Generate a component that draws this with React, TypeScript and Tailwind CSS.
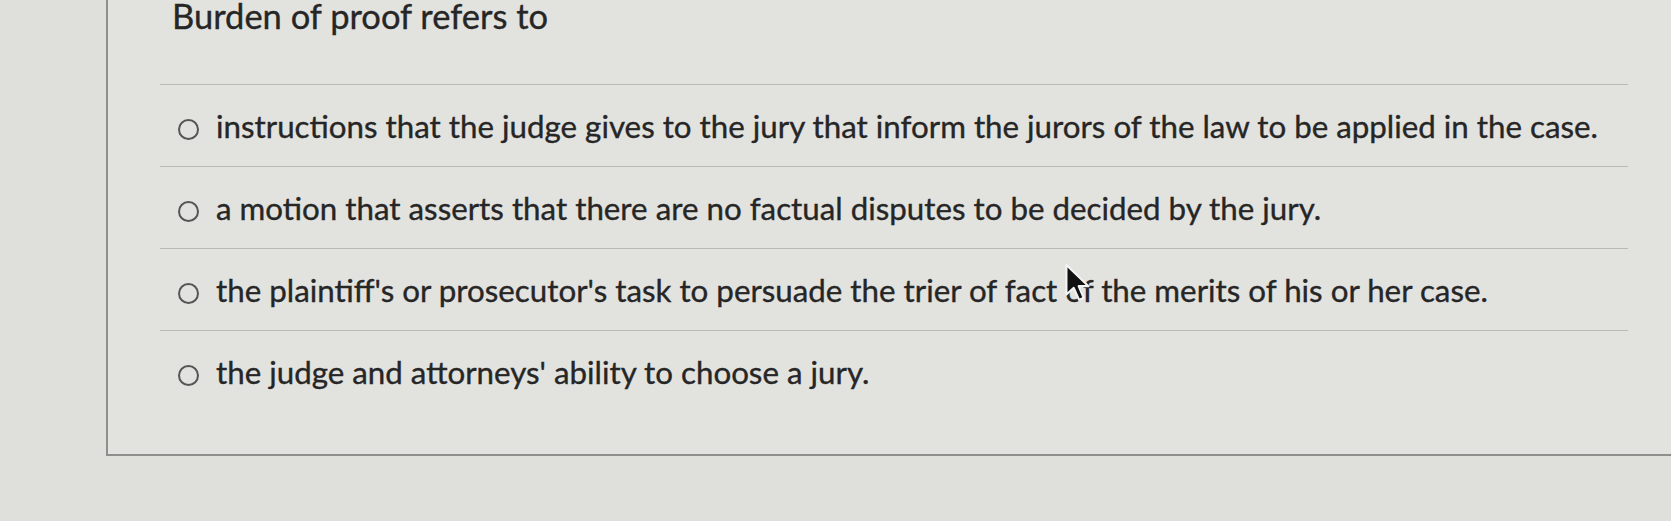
import React from "react";

const options = [
  "instructions that the judge gives to the jury that inform the jurors of the law to be applied in the case.",
  "a motion that asserts that there are no factual disputes to be decided by the jury.",
  "the plaintiff's or prosecutor's task to persuade the trier of fact of the merits of his or her case.",
  "the judge and attorneys' ability to choose a jury.",
];

function Cursor() {
  return (
    <svg
      className="absolute left-[1064px] top-[263px]"
      width="28"
      height="40"
      viewBox="0 0 13 19"
    >
      <path
        d="M1 1 L1 15 L4.5 11.8 L7 17.5 L9.2 16.5 L6.8 11 L11.5 11 Z"
        fill="#111"
        stroke="#f4f4f4"
        strokeWidth="1"
        strokeLinejoin="round"
      />
    </svg>
  );
}

export default function App() {
  return (
    <div
      className="relative w-[1671px] h-[521px] overflow-hidden bg-[#dfdfdc] text-[#262626] [-webkit-text-stroke:0.35px_#262626]"
      style={{ fontFamily: "Lato, 'Open Sans', sans-serif" }}
    >
      <div className="ml-[106px] h-[456px] border-l-2 border-b-2 border-[#8e8e8c] bg-[#e2e2df] pl-[52px] pr-[43px]">
        <div className="pl-[12px] pt-[1px] text-[34.5px] leading-[30px]">Burden of proof refers to</div>
        <div className="mt-[53px]">
          {options.map((o, i) => (
            <div
              key={i}
              className="flex h-[82px] items-center border-t border-[#b9b9b6] pl-[18px]"
            >
              <span className="mt-[8px] h-[21px] w-[21px] shrink-0 rounded-full border-2 border-[#555] [-webkit-text-stroke:0]" />
              <span className="ml-[17px] text-[31.3px] leading-[36px] whitespace-nowrap">{o}</span>
            </div>
          ))}
        </div>
      </div>
      <Cursor />
    </div>
  );
}
